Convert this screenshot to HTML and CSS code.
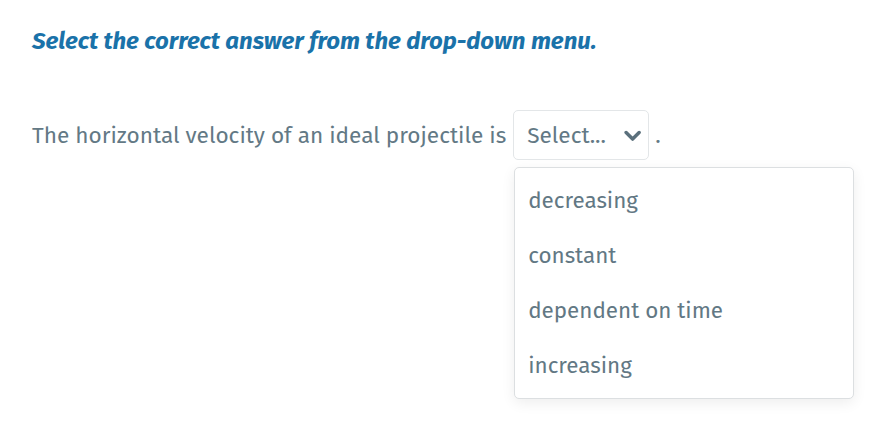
FILE: index.html
```html
<!DOCTYPE html>
<html lang="en">
<head>
<meta charset="utf-8">
<title>Drop-down question</title>
<link rel="stylesheet" href="styles.css">
</head>
<body>
<main class="content">
  <h1 class="prompt">Select the correct answer from the drop-down menu.</h1>
  <div class="question">
    <span class="stem">The horizontal velocity of an ideal projectile is</span>
    <div class="select-wrap">
      <div class="select">
        <span class="select-label">Select...</span>
        <svg class="chevron" width="18" height="12" viewBox="0 0 18 12" aria-hidden="true">
          <path d="M2.2 2.4 L9 9.2 L15.8 2.4" fill="none" stroke="currentColor" stroke-width="3.6" stroke-linecap="round" stroke-linejoin="round"/>
        </svg>
      </div>
      <div class="menu" role="listbox">
        <div class="option" role="option">decreasing</div>
        <div class="option" role="option">constant</div>
        <div class="option" role="option">dependent on time</div>
        <div class="option" role="option">increasing</div>
      </div>
    </div>
    <span class="stop">.</span>
  </div>
</main>
</body>
</html>
```
FILE: styles.css
```css
html, body {
  margin: 0;
  padding: 0;
  background: #ffffff;
}

html {
  height: 100%;
}

body {
  min-height: 100%;
}

.content {
  box-sizing: border-box;
  min-height: 448px;
  padding: 25px 32px 0 32px;
  font-family: "Fira Sans", "Open Sans", sans-serif;
}

.prompt {
  margin: 0;
  font-size: 24px;
  line-height: 32px;
  font-weight: 700;
  font-style: italic;
  color: #1a72a9;
}

.question {
  display: flex;
  align-items: baseline;
  margin-top: 53px;
  font-size: 22.6px;
  color: #637985;
}

.stem {
  line-height: 27px;
}

.select-wrap {
  position: relative;
  margin-left: 7px;
}

.select {
  display: flex;
  align-items: baseline;
  box-sizing: border-box;
  width: 136px;
  height: 50px;
  padding: 11px 7px 10px 13px;
  border: 1px solid #e3e6e8;
  border-radius: 5px;
  line-height: 27px;
  color: #637985;
}

.select-label {
  margin-right: 18px;
}

.chevron {
  align-self: center;
  color: #5b707c;
  margin-top: 1px;
}

.stop {
  margin-left: 6px;
  line-height: 27px;
}

.menu {
  position: absolute;
  z-index: 10;
  top: 57px;
  left: 1px;
  width: 340px;
  box-sizing: border-box;
  padding: 5px 0;
  background: #ffffff;
  border: 1px solid #dcdfe1;
  border-radius: 5px;
  box-shadow: 0 4px 14px rgba(0, 0, 0, 0.07);
}

.option {
  box-sizing: border-box;
  height: 55px;
  padding: 15px 13px 0 13px;
  font-size: 22.4px;
  line-height: 26px;
  color: #627884;
}
```
